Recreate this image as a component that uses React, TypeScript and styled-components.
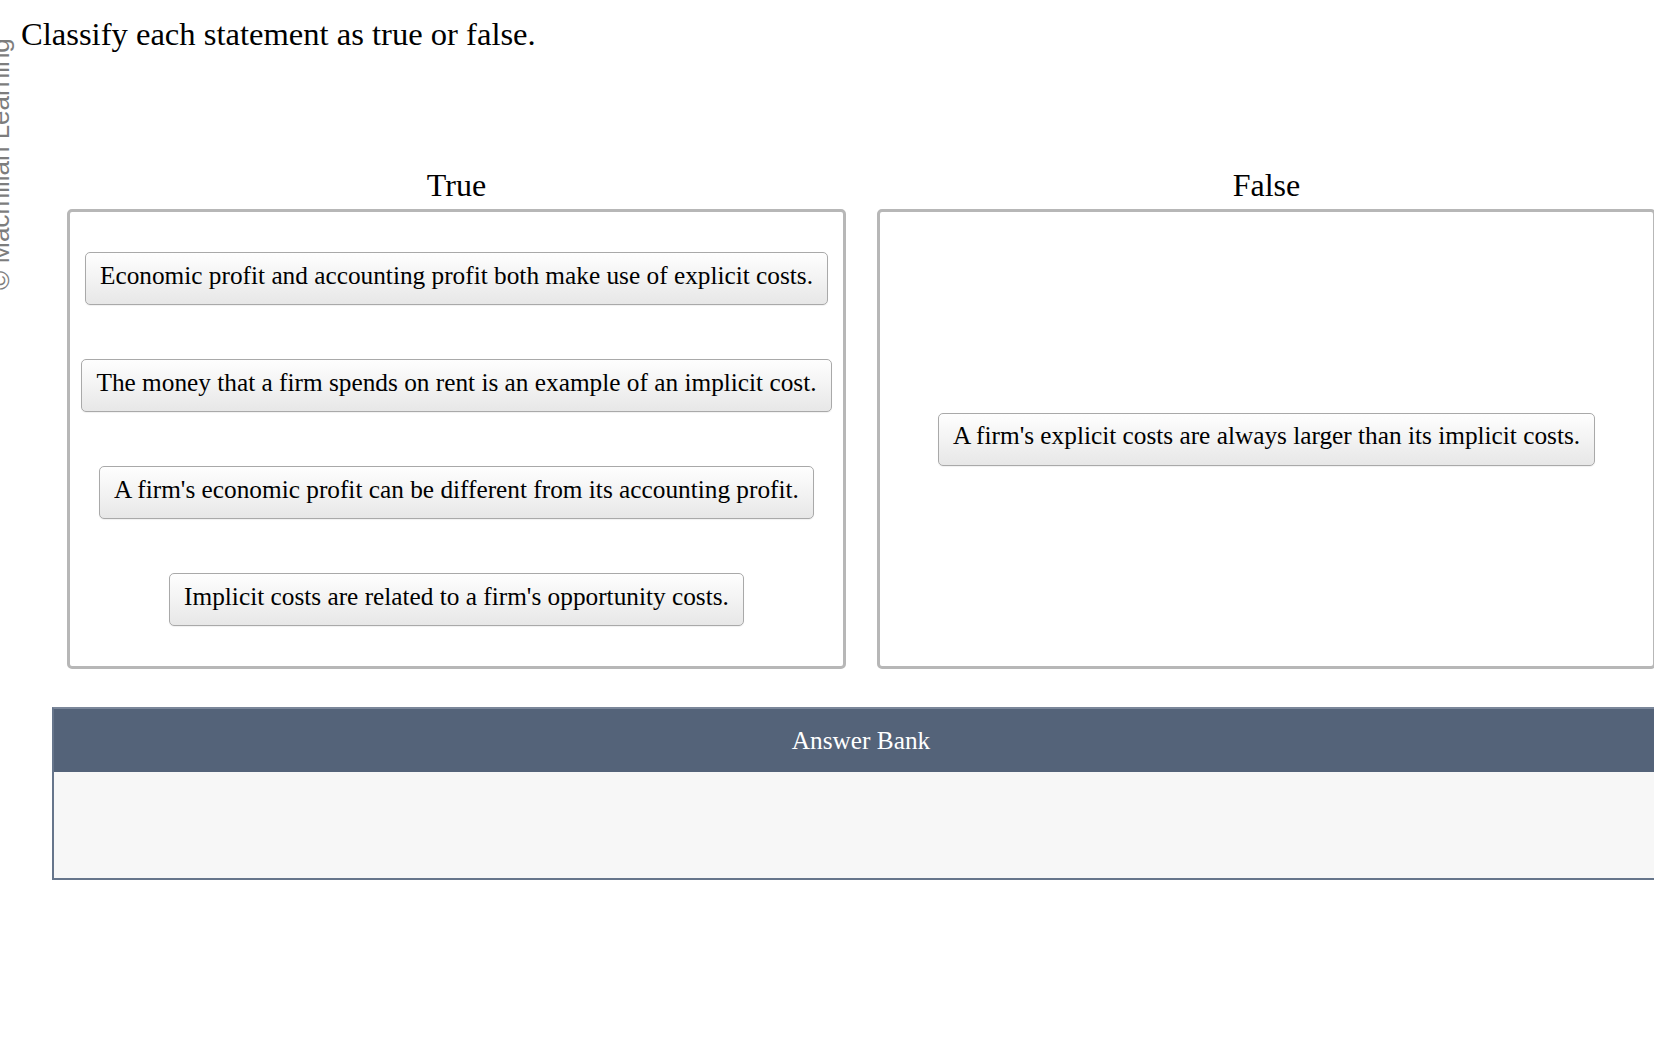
import React from "react";
import styled, { createGlobalStyle } from "styled-components";

const GlobalStyle = createGlobalStyle`
  html, body {
    margin: 0;
    padding: 0;
    background: #ffffff;
    overflow: hidden;
  }
  body {
    font-family: "Liberation Serif", "Times New Roman", Times, serif;
    color: #000;
  }
`;

const Page = styled.div`
  position: relative;
  width: 1654px;
  height: 1056px;
  padding-top: 16px;
  box-sizing: border-box;
  overflow: hidden;
`;

const Watermark = styled.span`
  position: absolute;
  left: -13px;
  top: 290px;
  transform-origin: 0 0;
  transform: rotate(-90deg);
  font-family: "Liberation Sans", Arial, sans-serif;
  font-size: 26px;
  line-height: 26px;
  color: #7d7d7d;
  white-space: nowrap;
`;

const Title = styled.h1`
  margin: 0 0 0 21px;
  font-size: 32.6px;
  line-height: 36px;
  font-weight: normal;
`;

const Board = styled.div`
  display: grid;
  grid-template-columns: 779px 779px;
  column-gap: 31px;
  margin: 115px 0 0 67px;
  width: max-content;
`;

const Column = styled.section`
  display: flex;
  flex-direction: column;
`;

const Heading = styled.h2`
  margin: 0 0 6px;
  font-size: 32px;
  line-height: 36px;
  font-weight: normal;
  text-align: center;
`;

const DropZone = styled.div`
  box-sizing: border-box;
  height: 460px;
  border: 3px solid #b7b7b7;
  border-radius: 5px;
  background: #ffffff;
  display: flex;
  flex-direction: column;
  align-items: center;
  justify-content: center;
  gap: 54px;
`;

const Card = styled.div`
  box-sizing: border-box;
  height: 53px;
  padding: 0 14px 7px;
  display: flex;
  align-items: center;
  border: 1px solid #a9a9a9;
  border-radius: 5px;
  background: linear-gradient(to bottom, #fefefe 0%, #f3f3f3 50%, #e7e7e7 100%);
  box-shadow: 0 1px 1px rgba(0, 0, 0, 0.06);
  font-size: 25.3px;
  white-space: nowrap;
`;

const Bank = styled.div`
  margin: 38px 0 0 52px;
  width: 1616px;
`;

const BankHeader = styled.div`
  box-sizing: border-box;
  height: 65px;
  display: flex;
  align-items: center;
  justify-content: center;
  background: #546379;
  border-top: 2px solid #7b879a;
  border-left: 2px solid #66758b;
  color: #ffffff;
  font-size: 25.3px;
`;

const BankBody = styled.div`
  box-sizing: border-box;
  height: 108px;
  background: #f7f7f7;
  border-left: 2px solid #66758b;
  border-bottom: 2px solid #66758b;
`;

const trueItems = [
  "Economic profit and accounting profit both make use of explicit costs.",
  "The money that a firm spends on rent is an example of an implicit cost.",
  "A firm's economic profit can be different from its accounting profit.",
  "Implicit costs are related to a firm's opportunity costs.",
];

const falseItems = [
  "A firm's explicit costs are always larger than its implicit costs.",
];

export default function App() {
  return (
    <>
      <GlobalStyle />
      <Page>
        <Watermark>© Macmillan Learning</Watermark>
        <Title>Classify each statement as true or false.</Title>
        <Board>
          <Column>
            <Heading>True</Heading>
            <DropZone>
              {trueItems.map((t) => (
                <Card key={t}>{t}</Card>
              ))}
            </DropZone>
          </Column>
          <Column>
            <Heading>False</Heading>
            <DropZone>
              {falseItems.map((t) => (
                <Card key={t}>{t}</Card>
              ))}
            </DropZone>
          </Column>
        </Board>
        <Bank>
          <BankHeader>Answer Bank</BankHeader>
          <BankBody />
        </Bank>
      </Page>
    </>
  );
}
